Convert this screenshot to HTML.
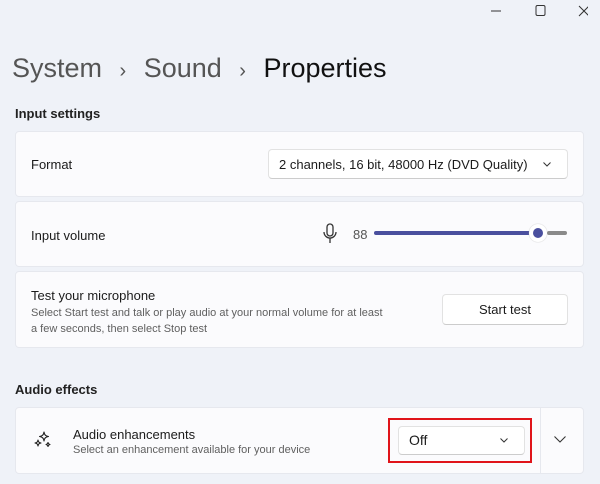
<!DOCTYPE html><html><head><style>
body{margin:0;width:600px;height:484px;background:#eff2f8;font-family:"Liberation Sans",sans-serif;position:relative;overflow:hidden;color:#1b1b1b}
.a{position:absolute}
.card{position:absolute;left:15px;width:569px;background:#fbfbfd;border:1px solid #e6e8ee;border-radius:4px;box-sizing:border-box}
.t{font-size:13px}
.s{font-size:11px;color:#606060}
.btn{position:absolute;background:#fff;border:1px solid #e2e2e2;border-bottom-color:#ccc;border-radius:4px;box-sizing:border-box;font-size:13px}
</style></head><body>
<svg class="a" style="left:488px;top:4px" width="100" height="14" viewBox="0 0 100 14"><path d="M3 7h10" stroke="#333" stroke-width="1"/><rect x="48" y="1.5" width="9" height="10" rx="1.5" fill="none" stroke="#333" stroke-width="1"/><path d="M91 2l10 10M101 2l-10 10" stroke="#333" stroke-width="1"/></svg>
<div class="a" style="left:12px;top:53px;font-size:27px;color:#555">System <span style="font-size:20px;margin:0 10px">›</span> Sound <span style="font-size:20px;margin:0 10px">›</span> <span style="color:#111">Properties</span></div>
<div class="a" style="left:15px;top:106px;font-size:13px;font-weight:bold;color:#222">Input settings</div>
<div class="card" style="top:131px;height:66px"></div>
<div class="a t" style="left:31px;top:157px">Format</div>
<div class="btn" style="left:268px;top:149px;width:300px;height:30px;padding:7px 10px">2 channels, 16 bit, 48000 Hz (DVD Quality)<svg style="position:absolute;right:16px;top:12px" width="8" height="5" viewBox="0 0 8 5"><path d="M0.5 0.5l3.5 3.5 3.5-3.5" fill="none" stroke="#333" stroke-width="1"/></svg></div>
<div class="card" style="top:201px;height:66px"></div>
<div class="a t" style="left:31px;top:228px">Input volume</div>
<svg class="a" style="left:322px;top:223px" width="16" height="22" viewBox="0 0 16 22"><rect x="5" y="1" width="6" height="12" rx="3" fill="none" stroke="#333" stroke-width="1.3"/><path d="M2 9a6 6 0 0 0 12 0M8 15v5" fill="none" stroke="#333" stroke-width="1.3"/></svg>
<div class="a" style="left:353px;top:227px;font-size:13px;color:#555">88</div>
<div class="a" style="left:374px;top:231px;width:162px;height:4px;background:#4a4f9e;border-radius:2px"></div>
<div class="a" style="left:547px;top:231px;width:20px;height:4px;background:#8a8a8a;border-radius:2px"></div>
<div class="a" style="left:529px;top:224px;width:18px;height:18px;background:#fff;border-radius:50%;box-shadow:0 0 1px #aaa"></div>
<div class="a" style="left:533px;top:228px;width:10px;height:10px;background:#4a4f9e;border-radius:50%"></div>
<div class="card" style="top:271px;height:77px"></div>
<div class="a t" style="left:31px;top:288px">Test your microphone</div>
<div class="a s" style="left:31px;top:305px;line-height:16px">Select Start test and talk or play audio at your normal volume for at least<br>a few seconds, then select Stop test</div>
<div class="btn" style="left:442px;top:294px;width:126px;height:31px;text-align:center;line-height:29px">Start test</div>
<div class="a" style="left:15px;top:382px;font-size:13px;font-weight:bold;color:#222">Audio effects</div>
<div class="card" style="top:407px;height:67px"></div>
<div class="a" style="left:540px;top:407px;width:1px;height:67px;background:#e6e8ee"></div>
<svg class="a" style="left:33px;top:430px" width="20" height="20" viewBox="0 0 20 20"><path d="M11 2c0.5 3 1.5 4 4.5 4.5c-3 0.5-4 1.5-4.5 4.5c-0.5-3-1.5-4-4.5-4.5c3-0.5 4-1.5 4.5-4.5z M5 10c0.4 2 1 2.6 3 3c-2 0.4-2.6 1-3 3c-0.4-2-1-2.6-3-3c2-0.4 2.6-1 3-3z M15 12.5c0.3 1.3 0.7 1.7 2 2c-1.3 0.3-1.7 0.7-2 2c-0.3-1.3-0.7-1.7-2-2c1.3-0.3 1.7-0.7 2-2z" fill="none" stroke="#222" stroke-width="1.1" stroke-linejoin="round"/></svg>
<div class="a t" style="left:73px;top:427px">Audio enhancements</div>
<div class="a s" style="left:73px;top:444px">Select an enhancement available for your device</div>
<div class="btn" style="left:398px;top:426px;width:127px;height:29px;line-height:27px;padding-left:10px;font-size:14px">Off<svg style="position:absolute;right:16px;top:11px" width="8" height="5" viewBox="0 0 8 5"><path d="M0.5 0.5l3.5 3.5 3.5-3.5" fill="none" stroke="#333" stroke-width="1"/></svg></div>
<div class="a" style="left:388px;top:418px;width:144px;height:45px;border:2px solid #e0141a;box-sizing:border-box"></div>
<svg class="a" style="left:554px;top:436px" width="12" height="7" viewBox="0 0 12 7"><path d="M0.5 0.5l5.5 5.5 5.5-5.5" fill="none" stroke="#333" stroke-width="1.1"/></svg>
</body></html>
